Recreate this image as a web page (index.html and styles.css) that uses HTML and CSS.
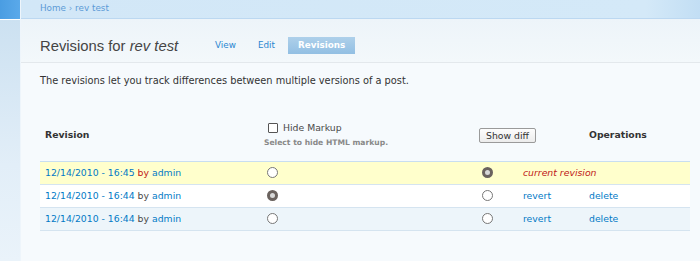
FILE: index.html
```html
<!DOCTYPE html>
<html>
<head>
<meta charset="utf-8">
<link rel="stylesheet" href="styles.css">
</head>
<body>
<div class="page">
  <div class="side">
    <div class="side-top"></div>
    <div class="side-rest"></div>
  </div>
  <div class="main">
    <div class="header">
      <div class="crumbs"><a href="#">Home</a> › <a href="#">rev test</a></div>
    </div>
    <div class="titlebar">
      <h2 class="title">Revisions for <em>rev test</em></h2>
      <ul class="tabs">
        <li><a href="#">View</a></li>
        <li><a href="#">Edit</a></li>
        <li class="active"><a href="#">Revisions</a></li>
      </ul>
    </div>
    <div class="content">
      <p class="intro">The revisions let you track differences between multiple versions of a post.</p>
      <table class="revs">
        <colgroup>
          <col class="c1"><col class="c2"><col class="c3"><col class="c4"><col class="c5">
        </colgroup>
        <thead>
          <tr>
            <th class="h-rev">Revision</th>
            <th class="h-markup">
              <label class="hide"><input type="checkbox" class="cb"> Hide Markup</label>
              <div class="desc">Select to hide HTML markup.</div>
            </th>
            <th colspan="2" class="h-diff"><button class="btn">Show diff</button></th>
            <th class="h-ops">Operations</th>
          </tr>
        </thead>
        <tbody>
          <tr class="current">
            <td><a href="#">12/14/2010 - 16:45</a> by <a href="#">admin</a></td>
            <td><input type="radio" class="rd" name="a"></td>
            <td><input type="radio" class="rd" name="b" checked></td>
            <td colspan="2" class="cur">current revision</td>
          </tr>
          <tr class="odd">
            <td><a href="#">12/14/2010 - 16:44</a> by <a href="#">admin</a></td>
            <td><input type="radio" class="rd" name="a" checked></td>
            <td><input type="radio" class="rd" name="b"></td>
            <td><a href="#">revert</a></td>
            <td><a href="#">delete</a></td>
          </tr>
          <tr class="even">
            <td><a href="#">12/14/2010 - 16:44</a> by <a href="#">admin</a></td>
            <td><input type="radio" class="rd" name="a"></td>
            <td><input type="radio" class="rd" name="b"></td>
            <td><a href="#">revert</a></td>
            <td><a href="#">delete</a></td>
          </tr>
        </tbody>
      </table>
    </div>
  </div>
</div>
</body>
</html>
```
FILE: styles.css
```css
html, body {
  margin: 0;
  padding: 0;
  height: 100%;
}
body {
  font-family: "DejaVu Sans", Verdana, sans-serif;
  font-size: 9.3px;
  color: #494949;
  background: #f6fafd;
}
a {
  color: #027ac6;
  text-decoration: none;
}
.page {
  display: flex;
  height: 261px;
  overflow: hidden;
}
.side {
  width: 20px;
  display: flex;
  flex-direction: column;
  border-right: 1px solid #eef5fb;
}
.side-top {
  height: 19px;
  background: linear-gradient(to right, #4a9de2, #5aa9ea);
  border-bottom: 1px solid #ffffff;
}
.side-rest {
  flex: 1;
  background: linear-gradient(to bottom, #cce1f1 0%, #e2eef8 60%, #eaf3fa 100%);
}
.main {
  flex: 1;
  display: flex;
  flex-direction: column;
}
.header {
  height: 18px;
  background: linear-gradient(to right, #d2e7f7 0%, #d4e9f8 92%, #c2def4 100%);
  border-bottom: 1px solid #bcd8f1;
  box-shadow: 0 1px 0 #ffffff;
}
.crumbs {
  padding: 3px 0 0 19px;
  font-size: 8.8px;
  color: #6ea4d8;
}
.crumbs a {
  color: #5c9ad6;
}
.titlebar {
  display: flex;
  align-items: flex-end;
  height: 43px;
  padding-left: 19px;
  background: linear-gradient(to bottom, #edf4f9, #f3f8fb);
  border-bottom: 1px solid #e3e8ec;
}
.title {
  margin: 0 0 8px 0;
  font-family: "Liberation Sans", Arial, sans-serif;
  font-weight: normal;
  font-size: 14.8px;
  color: #444;
  width: 175px;
}
.title em {
  font-style: italic;
}
.tabs {
  list-style: none;
  margin: 0 0 8px 0;
  padding: 0;
  display: flex;
}
.tabs li a {
  display: block;
  padding: 3px 11px 3px 11px;
  font-size: 8.8px;
  line-height: 11px;
  color: #2a86d0;
}
.tabs li:first-child a { padding-left: 0; }
.tabs li.active a {
  background: linear-gradient(to bottom, #aed0ea, #92bfe3);
  color: #ffffff;
  font-weight: bold;
  padding: 3px 10px;
  margin-left: 2px;
}
.content {
  flex: 1;
  padding: 0 10px 0 19px;
  background: #f6fafd;
}
.intro {
  margin: 11px 0 0 0;
  line-height: 14px;
  font-size: 9.8px;
  color: #333;
}
.revs {
  margin-top: 27px;
  border-collapse: collapse;
  table-layout: fixed;
  width: 650px;
}
.c1 { width: 223px; }
.c2 { width: 215px; }
.c3 { width: 40px; }
.c4 { width: 66px; }
.c5 { width: 106px; }
.revs th {
  text-align: left;
  font-weight: bold;
  color: #333;
  padding: 0 0 6px 5px;
  vertical-align: middle;
  border-bottom: 1px solid #c8def0;
  height: 40px;
  line-height: 12px;
}
.revs th.h-markup {
  font-weight: normal;
  padding-left: 1px;
}
.hide {
  display: flex;
  align-items: center;
  gap: 5px;
  padding-left: 4px;
  color: #494949;
}
.cb {
  margin: 0;
  width: 10px;
  height: 10px;
  appearance: none;
  border: 1px solid #555;
  border-radius: 1px;
  background: #fff;
}
.desc {
  margin-top: 3px;
  font-size: 7.6px;
  font-weight: bold;
  color: #898989;
}
.revs th.h-diff {
  padding-left: 1px;
}
.btn {
  font-family: "DejaVu Sans", Verdana, sans-serif;
  font-size: 9.3px;
  color: #333;
  padding: 0 6px;
  height: 15px;
  line-height: 13px;
  background: linear-gradient(to bottom, #fdfdfd, #ececec);
  border: 1px solid #9a9a9a;
  border-radius: 2px;
}
.revs td {
  height: 22px;
  padding: 0 0 0 5px;
  border-bottom: 1px solid #d5e4f0;
  vertical-align: middle;
  line-height: 12px;
}
.revs td:nth-child(2), .revs td:nth-child(3) {
  padding-left: 4px;
}
.rd {
  appearance: none;
  margin: 0;
  width: 11px;
  height: 11px;
  border: 1px solid #777;
  border-radius: 50%;
  background: #fff;
  vertical-align: middle;
  position: relative;
  top: -1px;
}
.rd:checked {
  border: 3px solid #6a625e;
  background: #d8d8d8;
}
tr.current td {
  background: #ffffcc;
  color: #c01818;
}
tr.current td a { color: #027ac6; }
td.cur {
  font-style: italic;
  color: #b0101a;
}
tr.odd td { background: #ffffff; }
tr.even td { background: #edf5fa; }
```
